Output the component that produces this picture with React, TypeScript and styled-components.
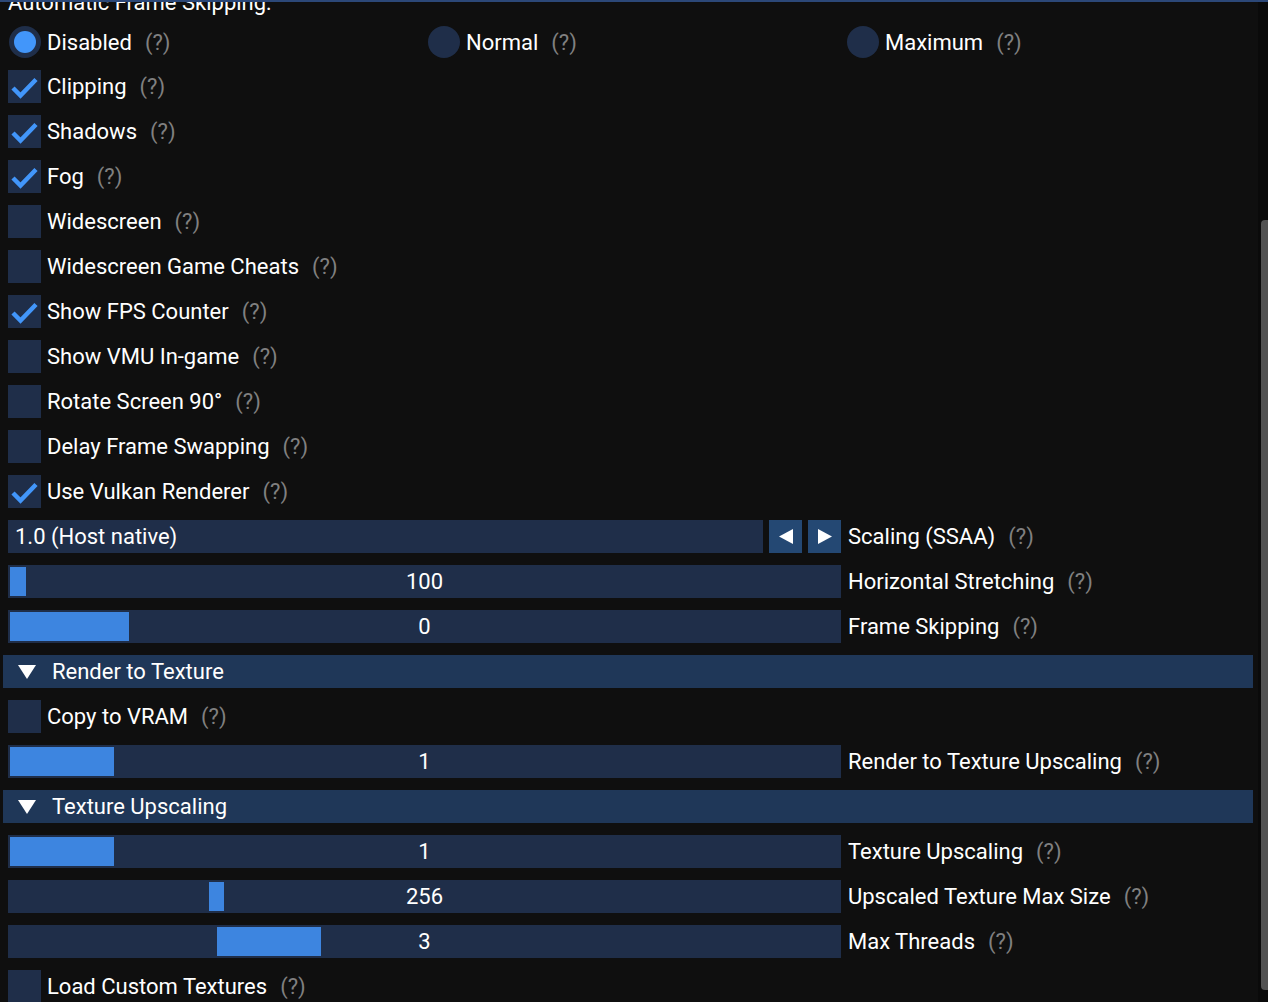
import React from "react";
import styled, { createGlobalStyle } from "styled-components";

const colorBg = "#0f0f0f";
const colorFrame = "#1f2e49";
const colorHeader = "#1f3758";
const colorButton = "#244873";
const colorCheck = "#4296fa";
const colorGrab = "#3d85e0";
const colorHelp = "#808080";

const GlobalStyle = createGlobalStyle`
  html, body {
    margin: 0;
    padding: 0;
    background: ${colorBg};
  }
  body {
    font-family: Roboto, "Liberation Sans", sans-serif;
    font-size: 22px;
    color: #ffffff;
  }
`;

const Window = styled.div`
  height: 1000px;
  border-top: 2px solid #2c4878;
  display: flex;
  overflow: hidden;
`;

const Content = styled.div`
  flex: 1;
  padding: 0 5px 0 3px;
  display: flex;
  flex-direction: column;
  gap: 12px;
  margin-top: -10px;
`;

const ScrollTrack = styled.div`
  width: 10px;
  background: #0a0a0a;
  display: flex;
  justify-content: flex-end;
`;

const ScrollThumb = styled.div`
  margin-top: 218px;
  width: 7px;
  height: 770px;
  background: #515151;
  border-radius: 4px 0 0 4px;
`;

const Label = styled.div`
  height: 22px;
  line-height: 22px;
  margin-left: 5px;
  white-space: nowrap;
`;

const Row = styled.div<{ $tall?: boolean }>`
  height: ${(p) => (p.$tall ? 34 : 33)}px;
  margin-left: 5px;
  display: flex;
  align-items: center;
  white-space: nowrap;
`;

const RadioGrid = styled.div`
  height: 33px;
  margin-left: 5px;
  display: grid;
  grid-template-columns: 419px 419px auto;
  align-items: center;
`;

const RadioItem = styled.div`
  display: flex;
  align-items: center;
`;

const RadioCircle = styled.div<{ $on: boolean }>`
  width: 32px;
  height: 32px;
  margin-left: 1px;
  border-radius: 50%;
  background: ${colorFrame};
  display: flex;
  align-items: center;
  justify-content: center;
  &::after {
    content: "";
    width: 22px;
    height: 22px;
    border-radius: 50%;
    background: ${colorCheck};
    display: ${(p) => (p.$on ? "block" : "none")};
  }
`;

const Box = styled.div`
  width: 33px;
  height: 33px;
  background: ${colorFrame};
  flex-shrink: 0;
`;

const ItemText = styled.span`
  margin-left: 6px;
`;

const Help = styled.span`
  margin-left: 13px;
  color: ${colorHelp};
`;

const Combo = styled.div`
  width: 755px;
  height: 33px;
  background: ${colorFrame};
  display: flex;
  align-items: center;
  padding-left: 7px;
  box-sizing: border-box;
`;

const ArrowButton = styled.div`
  width: 33px;
  height: 33px;
  margin-left: 6px;
  background: ${colorButton};
  display: flex;
  align-items: center;
  justify-content: center;
`;

const SliderFrame = styled.div`
  position: relative;
  width: 833px;
  height: 33px;
  background: ${colorFrame};
  display: flex;
  align-items: center;
  justify-content: center;
  flex-shrink: 0;
`;

const SliderGrab = styled.div`
  position: absolute;
  top: 2px;
  bottom: 2px;
  background: ${colorGrab};
`;

const SliderValue = styled.span`
  position: relative;
`;

const SideLabel = styled.span`
  margin-left: 7px;
`;

const Header = styled.div`
  height: 33px;
  width: 1250px;
  background: ${colorHeader};
  display: flex;
  align-items: center;
  padding-left: 15px;
  box-sizing: border-box;
  flex-shrink: 0;
`;

const HeaderText = styled.span`
  margin-left: 16px;
`;

const CheckMark = () => (
  <svg width="33" height="33" viewBox="0 0 33 33">
    <polyline
      points="5,18 12.5,25.5 28,9.5"
      fill="none"
      stroke={colorCheck}
      strokeWidth="4.5"
    />
  </svg>
);

const Triangle = ({ dir }: { dir: "left" | "right" | "down" }) => {
  const points =
    dir === "left"
      ? "14,0 14,15 0,7.5"
      : dir === "right"
        ? "0,0 14,7.5 0,15"
        : "0,0 18,0 9,14";
  const w = dir === "down" ? 18 : 14;
  const h = dir === "down" ? 14 : 15;
  return (
    <svg width={w} height={h} viewBox={`0 0 ${w} ${h}`}>
      <polygon points={points} fill="#ffffff" />
    </svg>
  );
};

const Checkbox = ({ label, on }: { label: string; on: boolean }) => (
  <Row>
    <Box>{on && <CheckMark />}</Box>
    <ItemText>{label}</ItemText>
    <Help>(?)</Help>
  </Row>
);

const Slider = ({
  label,
  value,
  left,
  width,
}: {
  label: string;
  value: string;
  left: number;
  width: number;
}) => (
  <Row>
    <SliderFrame>
      <SliderGrab style={{ left: left - 8, width }} />
      <SliderValue>{value}</SliderValue>
    </SliderFrame>
    <SideLabel>{label}</SideLabel>
    <Help>(?)</Help>
  </Row>
);

const checks1: [string, boolean][] = [
  ["Clipping", true],
  ["Shadows", true],
  ["Fog", true],
  ["Widescreen", false],
  ["Widescreen Game Cheats", false],
  ["Show FPS Counter", true],
  ["Show VMU In-game", false],
  ["Rotate Screen 90°", false],
  ["Delay Frame Swapping", false],
  ["Use Vulkan Renderer", true],
];

export default function App() {
  return (
    <>
      <GlobalStyle />
      <Window>
        <Content>
          <Label>Automatic Frame Skipping:</Label>
          <RadioGrid>
            {["Disabled", "Normal", "Maximum"].map((opt, i) => (
              <RadioItem key={opt}>
                <RadioCircle $on={i === 0} />
                <ItemText>{opt}</ItemText>
                <Help>(?)</Help>
              </RadioItem>
            ))}
          </RadioGrid>
          {checks1.map(([label, on]) => (
            <Checkbox key={label} label={label} on={on} />
          ))}
          <Row>
            <Combo>1.0 (Host native)</Combo>
            <ArrowButton>
              <Triangle dir="left" />
            </ArrowButton>
            <ArrowButton>
              <Triangle dir="right" />
            </ArrowButton>
            <SideLabel>Scaling (SSAA)</SideLabel>
            <Help>(?)</Help>
          </Row>
          <Slider label="Horizontal Stretching" value="100" left={10} width={16} />
          <Slider label="Frame Skipping" value="0" left={10} width={119} />
          <Header>
            <Triangle dir="down" />
            <HeaderText>Render to Texture</HeaderText>
          </Header>
          <Checkbox label="Copy to VRAM" on={false} />
          <Slider label="Render to Texture Upscaling" value="1" left={10} width={104} />
          <Header>
            <Triangle dir="down" />
            <HeaderText>Texture Upscaling</HeaderText>
          </Header>
          <Slider label="Texture Upscaling" value="1" left={10} width={104} />
          <Slider label="Upscaled Texture Max Size" value="256" left={209} width={15} />
          <Slider label="Max Threads" value="3" left={217} width={104} />
          <Checkbox label="Load Custom Textures" on={false} />
        </Content>
        <ScrollTrack>
          <ScrollThumb />
        </ScrollTrack>
      </Window>
    </>
  );
}
